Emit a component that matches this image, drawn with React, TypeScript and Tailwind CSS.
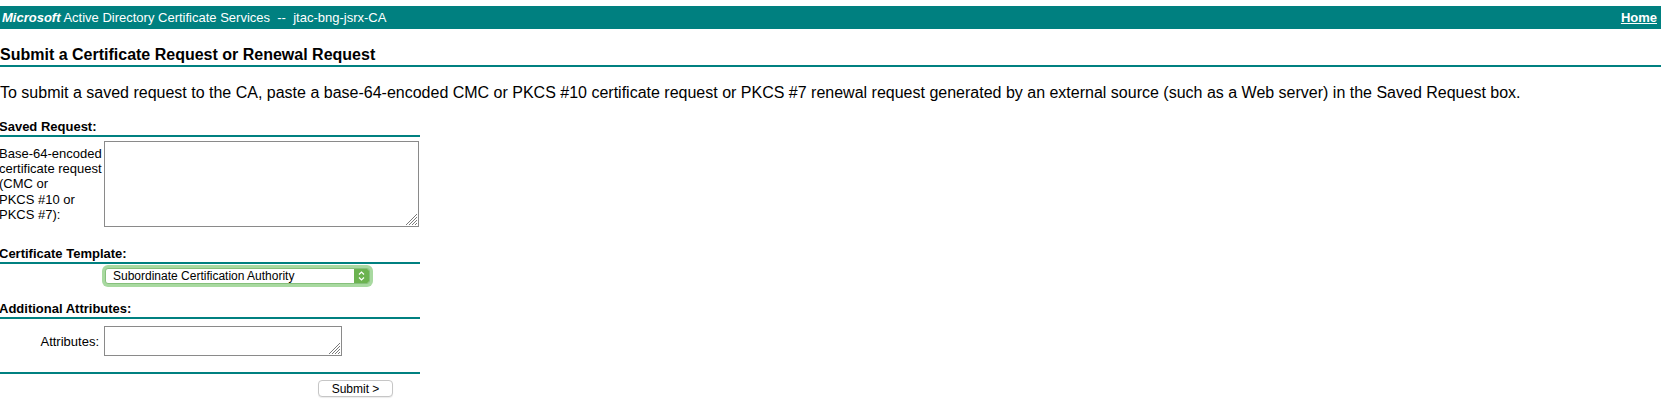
import React from "react";

function Grip() {
  return (
    <svg
      className="pointer-events-none absolute bottom-[2px] right-[2px]"
      width="11"
      height="11"
      viewBox="0 0 11 11"
    >
      <g stroke="#7a7a7a" strokeWidth="1">
        <line x1="11" y1="0" x2="0" y2="11" />
        <line x1="11" y1="3" x2="3" y2="11" />
        <line x1="11" y1="6" x2="6" y2="11" />
        <line x1="11" y1="9" x2="9" y2="11" />
      </g>
    </svg>
  );
}

function FakeTextArea({ w, h }: { w: string; h: string }) {
  return (
    <div className={`relative ${w} ${h}`}>
      <textarea className="block h-full w-full resize-none border border-[#8a8a8a] bg-white outline-none" />
      <Grip />
    </div>
  );
}

function SectionLabel({ text, mt }: { text: string; mt: string }) {
  return (
    <>
      <div className={`${mt} text-[13px] font-bold leading-[14px]`}>{text}</div>
      <div className="mt-[1px] h-[2px] bg-[#008080]" />
    </>
  );
}

export default function App() {
  return (
    <div className="min-h-[413px] w-full overflow-hidden bg-white font-['Liberation_Sans',Arial,sans-serif] text-black">
      <div className="-ml-[1px] w-[1662px] pt-[6px]">
        <div className="flex h-[23px] items-center justify-between bg-[#008080] pl-[3px] pr-[4px] text-[13px] leading-[15px] text-white">
          <span>
            <b>
              <i>Microsoft</i>
            </b>{" "}
            Active Directory Certificate Services{"\u00a0\u00a0"}--{"\u00a0\u00a0"}jtac-bng-jsrx-CA
          </span>
          <a className="font-bold underline">Home</a>
        </div>

        <h1 className="mt-[17px] pl-[1px] text-[16px] font-bold leading-[18px]">
          Submit a Certificate Request or Renewal Request
        </h1>
        <div className="mt-[1px] h-[2px] bg-[#008080]" />

        <p className="mt-[17px] whitespace-nowrap pl-[1px] text-[16px] leading-[18px]">
          To submit a saved request to the CA, paste a base-64-encoded CMC or PKCS #10 certificate request or PKCS #7
          renewal request generated by an external source (such as a Web server) in the Saved Request box.
        </p>

        <div className="w-[421px]">
          <SectionLabel text="Saved Request:" mt="mt-[18px]" />
          <div className="mt-[4px] flex items-center">
            <div className="w-[105px] text-[13px] leading-[15.25px]">
              Base-64-encoded
              <br />
              certificate request
              <br />
              (CMC or
              <br />
              PKCS #10 or
              <br />
              PKCS #7):
            </div>
            <FakeTextArea w="w-[315px]" h="h-[86px]" />
          </div>

          <SectionLabel text="Certificate Template:" mt="mt-[20px]" />
          <div className="mt-[1px] flex">
            <div className="w-[103px]" />
            <div className="flex h-[22px] w-[271px] rounded-[6px] bg-[#a8d9a0] p-[3px]">
              <div className="flex flex-1 items-center rounded-[3px] border border-[#86c07c] bg-white">
                <span className="flex-1 pl-[7px] text-[12px] leading-[14px]">
                  Subordinate Certification Authority
                </span>
                <div className="flex h-full w-[15px] items-center justify-center rounded-r-[2px] bg-[#6cb350]">
                  <svg width="7" height="10" viewBox="0 0 7 10">
                    <g fill="none" stroke="#ffffff" strokeWidth="1.2">
                      <polyline points="1,3.5 3.5,1 6,3.5" />
                      <polyline points="1,6.5 3.5,9 6,6.5" />
                    </g>
                  </svg>
                </div>
              </div>
            </div>
          </div>

          <SectionLabel text="Additional Attributes:" mt="mt-[15px]" />
          <div className="mt-[7px] flex items-center">
            <div className="w-[105px] pr-[5px] text-right text-[13px] leading-[15px]">Attributes:</div>
            <FakeTextArea w="w-[238px]" h="h-[30px]" />
          </div>

          <div className="mt-[16px] h-[2px] bg-[#008080]" />
          <div className="mt-[6px] flex justify-end pr-[27px]">
            <button className="flex h-[17px] w-[75px] items-center justify-center rounded-[4px] border border-[#c6c6c6] bg-white text-[12px] leading-[14px] shadow-[0_1px_1px_rgba(0,0,0,0.08)]">
              Submit &gt;
            </button>
          </div>
        </div>
      </div>
    </div>
  );
}
